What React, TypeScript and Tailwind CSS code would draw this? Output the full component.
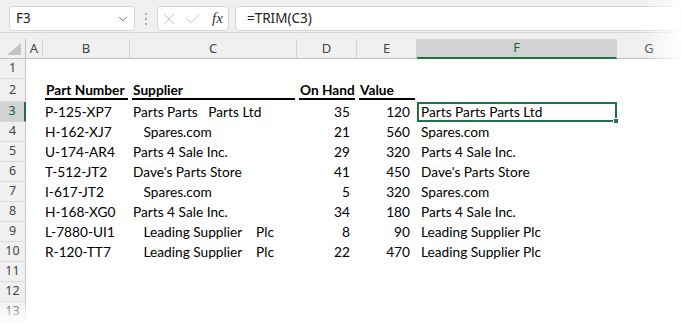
import { ChevronDown, X, Check } from "lucide-react";

const rows = [
  ["P-125-XP7", "Parts Parts   Parts Ltd", 35, 120, "Parts Parts Parts Ltd"],
  ["H-162-XJ7", "   Spares.com", 21, 560, "Spares.com"],
  ["U-174-AR4", "Parts 4 Sale Inc.", 29, 320, "Parts 4 Sale Inc."],
  ["T-512-JT2", "Dave's Parts Store", 41, 450, "Dave's Parts Store"],
  ["I-617-JT2", "   Spares.com", 5, 320, "Spares.com"],
  ["H-168-XG0", "Parts 4 Sale Inc.", 34, 180, "Parts 4 Sale Inc."],
  ["L-7880-UI1", "   Leading Supplier    Plc", 8, 90, "Leading Supplier Plc"],
  ["R-120-TT7", "   Leading Supplier    Plc", 22, 470, "Leading Supplier Plc"],
];

const uiFont = "font-['Noto_Sans',sans-serif]";
const cellFont = "font-['Lato',sans-serif] text-[13.7px] text-black";

const RowHead = ({ n, h = "h-[20px]", active = false }) => (
  <div
    className={`${h} w-[26px] shrink-0 flex items-center justify-center ${uiFont} text-[12.5px] border-b border-[#dadada] ${
      active
        ? "bg-[#d2d2d2] text-[#1d5c3b] border-r-2 border-r-[#217346]"
        : "bg-[#f0f0f0] text-[#444] border-r border-r-[#c8c8c8]"
    }`}
  >
    {n}
  </div>
);

const ColHead = ({ label, w, active = false }) => (
  <div
    className={`${w} h-full flex items-center justify-center ${uiFont} text-[13px] border-r border-[#d4d4d4] ${
      active
        ? "bg-[#d2d2d2] text-[#1d5c3b] border-b-2 border-b-[#217346]"
        : "text-[#444] border-b border-b-[#bdbdbd]"
    }`}
  >
    {label}
  </div>
);

const Header = ({ text, w }) => (
  <div className={`${w} h-full flex items-end px-[2px] pb-[2px]`}>
    <span className={`w-full ${cellFont} font-bold leading-[16px] border-b-2 border-black pl-[1px]`}>
      {text}
    </span>
  </div>
);

export default function App() {
  return (
    <div className="relative w-[682px] h-[324px] overflow-hidden bg-white">
      {/* formula bar */}
      <div className="h-[33px] bg-[#f0f0f0] border-b border-[#d6d6d6] flex items-center pt-[6px] pb-[1px]">
        <div className="ml-[9px] w-[126px] h-[25px] bg-white border border-[#d6d6d6] rounded-[4px] flex items-center justify-between pl-[6px] pr-[4px]">
          <span className={`${uiFont} text-[13.5px] text-[#222]`}>F3</span>
          <ChevronDown className="w-[14px] h-[14px] text-[#555]" strokeWidth={1.5} />
        </div>
        <div className="w-[22px] flex flex-col items-center gap-[3px]">
          <span className="w-[2px] h-[2px] bg-[#9a9a9a] rounded-full" />
          <span className="w-[2px] h-[2px] bg-[#9a9a9a] rounded-full" />
          <span className="w-[2px] h-[2px] bg-[#9a9a9a] rounded-full" />
        </div>
        <div className="w-[72px] h-[25px] bg-white border border-[#d6d6d6] rounded-[4px] flex items-center pl-[2px]">
          <X className="w-[18px] h-[18px] text-[#bdbdbd]" strokeWidth={1.2} />
          <Check className="w-[18px] h-[18px] ml-[6px] text-[#bdbdbd]" strokeWidth={1.2} />
          <span className="ml-[10px] font-['Liberation_Serif',serif] italic text-[15px] text-[#333]">fx</span>
        </div>
        <div className="ml-[6px] flex-1 h-[25px] bg-white border border-[#d6d6d6] rounded-l-[4px] flex items-center pl-[11px]">
          <span className={`${uiFont} text-[13.5px] text-[#222]`}>=TRIM(C3)</span>
        </div>
      </div>
      <div className="h-[6px] bg-[#f0f0f0]" />

      {/* column headers */}
      <div className="h-[20px] flex bg-[#f0f0f0]">
        <div className="w-[26px] h-full border-r border-b border-[#bdbdbd] flex items-end justify-end pr-[4px] pb-[3px]">
          <svg width="14" height="12" viewBox="0 0 14 12">
            <polygon points="14,0 14,12 0,12" fill="#c4c4c4" />
          </svg>
        </div>
        <ColHead label="A" w="w-[17px]" />
        <ColHead label="B" w="w-[87px]" />
        <ColHead label="C" w="w-[167px]" />
        <ColHead label="D" w="w-[60px]" />
        <ColHead label="E" w="w-[60px]" />
        <ColHead label="F" w="w-[200px]" active />
        <ColHead label="G" w="flex-1" />
      </div>

      {/* rows 1 and 2 */}
      <div className="flex h-[20px]">
        <RowHead n={1} />
      </div>
      <div className="flex h-[23px]">
        <RowHead n={2} h="h-[23px]" />
        <div className="w-[17px]" />
        <Header text="Part Number" w="w-[87px]" />
        <Header text="Supplier" w="w-[167px]" />
        <Header text="On Hand" w="w-[60px]" />
        <Header text="Value" w="w-[60px]" />
      </div>

      {/* data rows */}
      {rows.map((r, i) => (
        <div key={i} className={`flex h-[20px] ${cellFont}`}>
          <RowHead n={i + 3} active={i === 0} />
          <div className="w-[17px]" />
          <div className="w-[87px] flex items-center pl-[2px] pt-[1px]">{r[0]}</div>
          <div className="w-[167px] flex items-center pl-[3px] pt-[1px] whitespace-pre">{r[1]}</div>
          <div className="w-[60px] flex items-center justify-end pr-[7px] pt-[1px]">{r[2]}</div>
          <div className="w-[60px] flex items-center justify-end pr-[7px] pt-[1px]">{r[3]}</div>
          <div
            className={
              i === 0
                ? "relative w-[200px] flex items-center pl-[2px] border-2 border-[#217346]"
                : "w-[200px] flex items-center pl-[4px] pt-[1px]"
            }
          >
            {r[4]}
            {i === 0 && (
              <span className="absolute -right-[4px] -bottom-[4px] w-[6px] h-[6px] bg-[#217346] border border-white" />
            )}
          </div>
        </div>
      ))}
      {[11, 12, 13].map((n) => (
        <div key={n} className="flex h-[20px]">
          <RowHead n={n} />
        </div>
      ))}

      {/* edge fades */}
      <div className="absolute top-0 right-0 w-[40px] h-[60px] bg-gradient-to-r from-transparent to-white" />
      <div className="absolute left-0 bottom-0 w-full h-[26px] bg-gradient-to-b from-transparent to-white" />
    </div>
  );
}
